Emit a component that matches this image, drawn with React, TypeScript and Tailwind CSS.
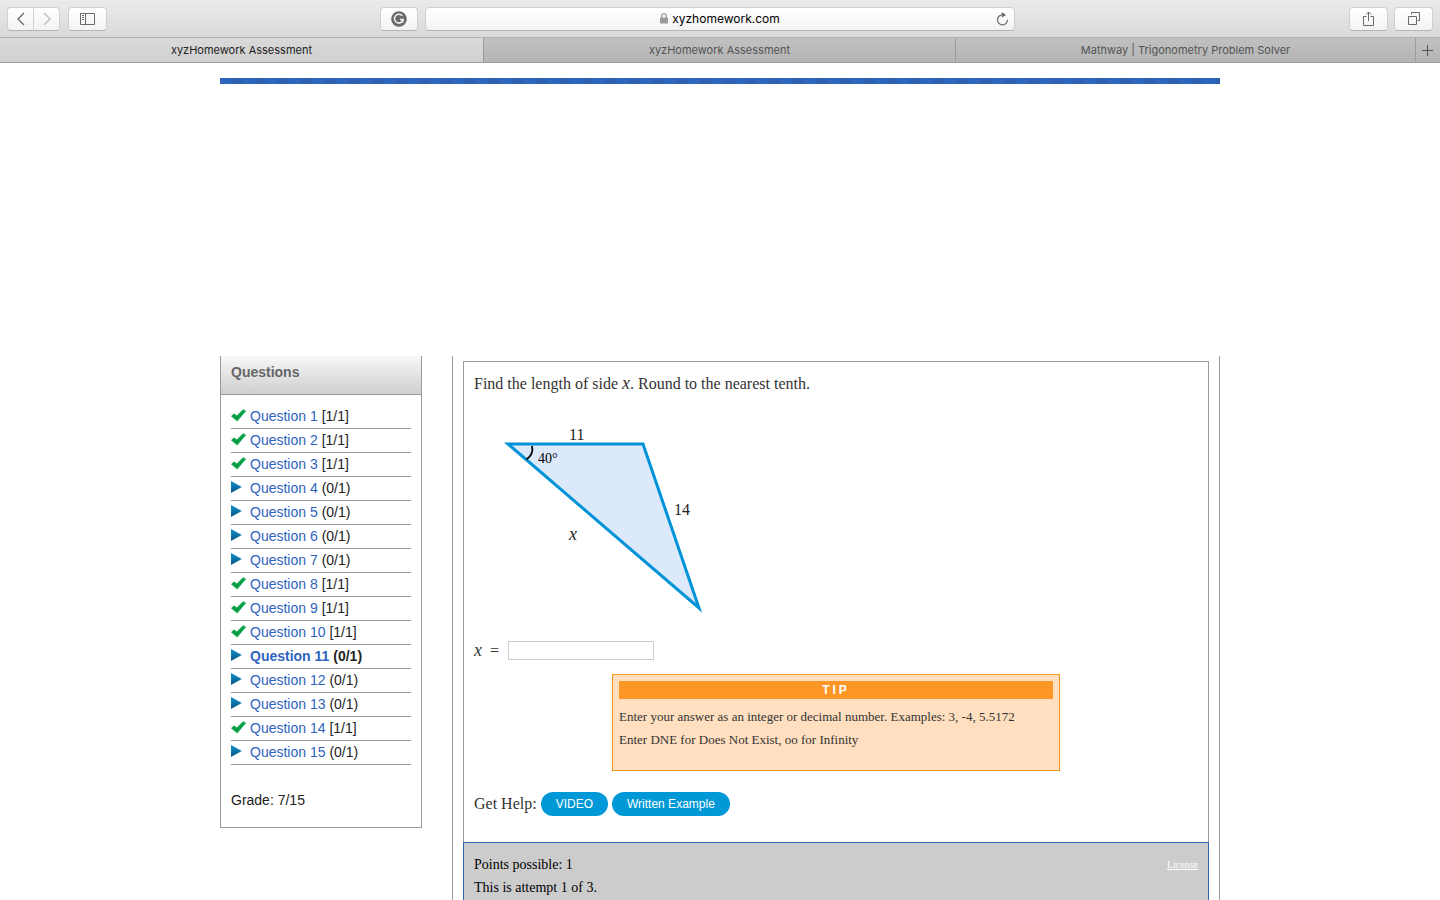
import type { ReactNode } from "react";

type Question = { id: number; score: string; done: boolean; current?: boolean };

const questions: Question[] = [
  { id: 1, score: "[1/1]", done: true },
  { id: 2, score: "[1/1]", done: true },
  { id: 3, score: "[1/1]", done: true },
  { id: 4, score: "(0/1)", done: false },
  { id: 5, score: "(0/1)", done: false },
  { id: 6, score: "(0/1)", done: false },
  { id: 7, score: "(0/1)", done: false },
  { id: 8, score: "[1/1]", done: true },
  { id: 9, score: "[1/1]", done: true },
  { id: 10, score: "[1/1]", done: true },
  { id: 11, score: "(0/1)", done: false, current: true },
  { id: 12, score: "(0/1)", done: false },
  { id: 13, score: "(0/1)", done: false },
  { id: 14, score: "[1/1]", done: true },
  { id: 15, score: "(0/1)", done: false },
];

function ToolButton({ label, className, children }: { label: string; className: string; children: ReactNode }) {
  return (
    <button
      type="button"
      aria-label={label}
      className={`flex h-6 items-center justify-center border border-[#d0d0d0] border-b-[#b4b4b4] bg-linear-to-b from-white to-[#f3f3f3] ${className}`}
    >
      {children}
    </button>
  );
}

function Toolbar() {
  return (
    <header className="grid h-[38px] grid-cols-[1fr_minmax(0,590px)_1fr] items-center gap-[7px] border-b border-[#b2b2b2] bg-linear-to-b from-[#ebebeb] to-[#d9d9d9] px-[7px]">
      <div className="flex justify-between">
        <div className="flex">
          <ToolButton label="Back" className="w-[27px] rounded-l">
            <svg width="8" height="14" viewBox="0 0 8 14" fill="none" stroke="#6b6b6b" strokeWidth="1.4">
              <path d="M7 1 1 7l6 6" />
            </svg>
          </ToolButton>
          <ToolButton label="Forward" className="-ml-px w-[27px] rounded-r">
            <svg width="8" height="14" viewBox="0 0 8 14" fill="none" stroke="#bcbcbc" strokeWidth="1.4">
              <path d="m1 1 6 6-6 6" />
            </svg>
          </ToolButton>
          <ToolButton label="Show sidebar" className="ml-2 w-[39px] rounded">
            <svg width="15" height="12" viewBox="0 0 15 12" fill="none" stroke="#6b6b6b">
              <path d="M.5.5h14v11H.5zM5.500.5v11M2 2.500h2M2 4.500h2M2 6.500h2" />
            </svg>
          </ToolButton>
        </div>
        <ToolButton label="Grammar check" className="w-[38px] rounded">
          <svg width="16" height="16" viewBox="0 0 16 16" fill="none">
            <circle cx="8" cy="8" r="7.800" fill="#6b6b6b" />
            <path d="M11.300 4.800A4.400 4.400 0 1 0 12.200 8.500H9" stroke="#f5f5f5" strokeWidth="1.500" />
            <path d="M11.800 8.500v3" stroke="#f5f5f5" strokeWidth="1.200" />
          </svg>
        </ToolButton>
      </div>
      <div className="grid h-6 grid-cols-[24px_1fr_24px] items-center rounded border border-[#d0d0d0] border-b-[#b4b4b4] bg-linear-to-b from-white to-[#f3f3f3]">
        <span />
        <div className="flex items-center justify-center gap-1 text-xs text-black">
          <svg width="8" height="11" viewBox="0 0 8 11" fill="none">
            <path d="M1.700 5V3.200a2.300 2.600 0 0 1 4.600 0V5" stroke="#9b9b9b" strokeWidth="1.200" />
            <rect y="4.500" width="8" height="6" rx=".6" fill="#9b9b9b" />
          </svg>
          <span>xyzhomework.com</span>
        </div>
        <button type="button" aria-label="Reload" className="flex justify-center">
          <svg width="13" height="14" viewBox="0 0 13 14" fill="none">
            <path d="M6.500 2.800A5 5 0 1 0 11.500 7.800" stroke="#6b6b6b" strokeWidth="1.200" />
            <path d="m5.800 0 4.400 2.900-4.400 2.500z" fill="#6b6b6b" />
          </svg>
        </button>
      </div>
      <div className="flex justify-end gap-1.5">
        <ToolButton label="Share" className="w-[39px] rounded">
          <svg width="11" height="16" viewBox="0 0 11 16" fill="none" stroke="#6b6b6b">
            <path d="M3.500 5.500h-3v9h10v-9h-3M5.500 10V1M3 3.500 5.500 1 8 3.500" />
          </svg>
        </ToolButton>
        <ToolButton label="Show all tabs" className="w-[39px] rounded">
          <svg width="12" height="13" viewBox="0 0 12 13" fill="none" stroke="#6b6b6b">
            <path d="M.5 4.500h8v8h-8zM3.500 2.500v-2h8v8h-2" />
          </svg>
        </ToolButton>
      </div>
    </header>
  );
}

function TabBar() {
  const idle = "border-l border-[#9c9c9c] bg-linear-to-b from-[#c1c1c1] to-[#b5b5b5] text-[#545454]";
  return (
    <nav
      aria-label="Tabs"
      className="grid h-[25px] grid-cols-[483fr_472fr_460fr_25px] border-b border-[#9c9c9c] text-[11px]"
    >
      <button type="button" className="bg-linear-to-b from-[#dadada] to-[#d0d0d0] text-[#222]">
        xyzHomework Assessment
      </button>
      <button type="button" className={idle}>
        xyzHomework Assessment
      </button>
      <button type="button" className={idle}>
        Mathway | Trigonometry Problem Solver
      </button>
      <button type="button" aria-label="New tab" className={`flex items-center justify-center ${idle}`}>
        <svg width="12" height="11" viewBox="0 0 12 11" stroke="#545454">
          <path d="M5.500 0v11M0 5.500h11" />
        </svg>
      </button>
    </nav>
  );
}

function StatusIcon({ done }: { done: boolean }) {
  return done ? (
    <svg width="15" height="14" viewBox="0 0 15 14" className="shrink-0" aria-hidden="true">
      <path d="M0 7.200 2.900 4.400 5.800 6.500 12.300.2 15 1.900 6.300 12.200z" fill="#08a045" />
    </svg>
  ) : (
    <svg width="15" height="14" viewBox="0 0 15 14" className="shrink-0" aria-hidden="true">
      <defs>
        <linearGradient id="arrow" x1="0" y1="0" x2="0" y2="1">
          <stop offset="0" stopColor="#1590cc" />
          <stop offset="1" stopColor="#07588c" />
        </linearGradient>
      </defs>
      <path d="M0 0 10.800 6 0 12z" fill="url(#arrow)" />
    </svg>
  );
}

function Sidebar() {
  return (
    <aside className="w-[202px] shrink-0 self-start border border-t-0 border-[#999] font-['Liberation_Sans',Arial,sans-serif] text-sm text-[#222]">
      <h2 className="h-[39px] border-b border-[#999] bg-linear-to-b from-[#f8f8f8] to-[#cfcfcf] px-2.5 leading-8 font-bold text-[#666]">
        Questions
      </h2>
      <ul className="px-2.5 pt-2.5">
        {questions.map((q) => (
          <li
            key={q.id}
            className={`flex h-6 items-center gap-1 border-b border-[#999] pb-0.5 ${q.current ? "font-bold" : ""}`}
          >
            <StatusIcon done={q.done} />
            <span>
              <a href={`#question-${q.id}`} className="text-[#2f63be]">
                Question {q.id}
              </a>{" "}
              {q.score}
            </span>
          </li>
        ))}
      </ul>
      <p className="px-2.5 pt-[25px] pb-[17px]">Grade: 7/15</p>
    </aside>
  );
}

function MathX() {
  return <i className="text-lg leading-4">x</i>;
}

function Triangle() {
  return (
    <svg width="240" height="200" viewBox="0 0 240 200" role="img" aria-label="Triangle" className="block">
      <path d="M34 24H169L225 188Z" fill="#dce9fa" stroke="#0093d8" strokeWidth="3" strokeMiterlimit="10" />
      <path d="M58 26Q60 34 52.500 39.500" fill="none" stroke="#000" strokeWidth="1.800" />
      <g fontFamily="'Liberation Serif', serif" fontSize="16" fill="#222">
        <text x="95" y="20">11</text>
        <text x="64" y="43" fontSize="14" fill="#000">40°</text>
        <text x="200" y="95">14</text>
        <text x="95" y="120" fontStyle="italic" fontSize="18">x</text>
      </g>
    </svg>
  );
}

const pill =
  "flex h-6 items-center rounded-full bg-[#0098d6] px-[15px] font-['Liberation_Sans',Arial,sans-serif] text-xs text-white";

function Problem() {
  return (
    <main className="ml-[30px] flex flex-1 flex-col border-x border-[#999] px-2.5 pt-[5px] font-['Liberation_Serif','Times_New_Roman',serif] text-base text-[#333]">
      <section className="border border-b-0 border-[#999] px-2.5 pb-[26px]">
        <p className="pt-2.5 leading-6">
          Find the length of side <MathX />. Round to the nearest tenth.
        </p>
        <div className="pt-6">
          <Triangle />
        </div>
        <div className="mt-[21px] flex items-center gap-[9px]">
          <label htmlFor="answer" className="leading-[19px]">
            <MathX />&nbsp; =
          </label>
          <input id="answer" type="text" className="h-[19px] w-[146px] border border-[#ccc] bg-white px-1 text-sm" />
        </div>
        <div className="mx-auto mt-3.5 h-[97px] w-full max-w-[448px] border border-[#fb9627] bg-[#ffdfbf] p-1.5 text-[13px]">
          <h3 className="bg-[#fb9627] text-center font-['Liberation_Sans',Arial,sans-serif] text-xs leading-[18px] font-bold tracking-[3px] text-white">
            TIP
          </h3>
          <p className="pt-1.5 leading-[23px]">
            Enter your answer as an integer or decimal number. Examples: 3, -4, 5.5172
            <br />
            Enter DNE for Does Not Exist, oo for Infinity
          </p>
        </div>
        <div className="mt-[21px] flex items-center gap-1">
          <span>Get Help:</span>
          <button type="button" className={pill}>
            VIDEO
          </button>
          <button type="button" className={pill}>
            Written Example
          </button>
        </div>
      </section>
      <footer className="flex flex-1 items-start justify-between border border-b-0 border-[#2f63be] bg-[#ccc] px-2.5 pt-2.5 text-sm leading-[23px] text-black">
        <p>
          Points possible: 1
          <br />
          This is attempt 1 of 3.
        </p>
        <a href="#license" className="text-[10px] text-white underline">
          License
        </a>
      </footer>
    </main>
  );
}

export default function App() {
  return (
    <div className="flex min-h-screen flex-col bg-white font-[Inter,sans-serif]">
      <Toolbar />
      <TabBar />
      <div className="mx-auto flex w-full max-w-[1000px] flex-1 flex-col pt-[15px]">
        <div className="h-1.5 bg-[repeating-linear-gradient(70deg,#2f67be_0_11px,#2e61b2_11px_22px)]" />
        <div className="mt-[272px] flex flex-1">
          <Sidebar />
          <Problem />
        </div>
      </div>
    </div>
  );
}
